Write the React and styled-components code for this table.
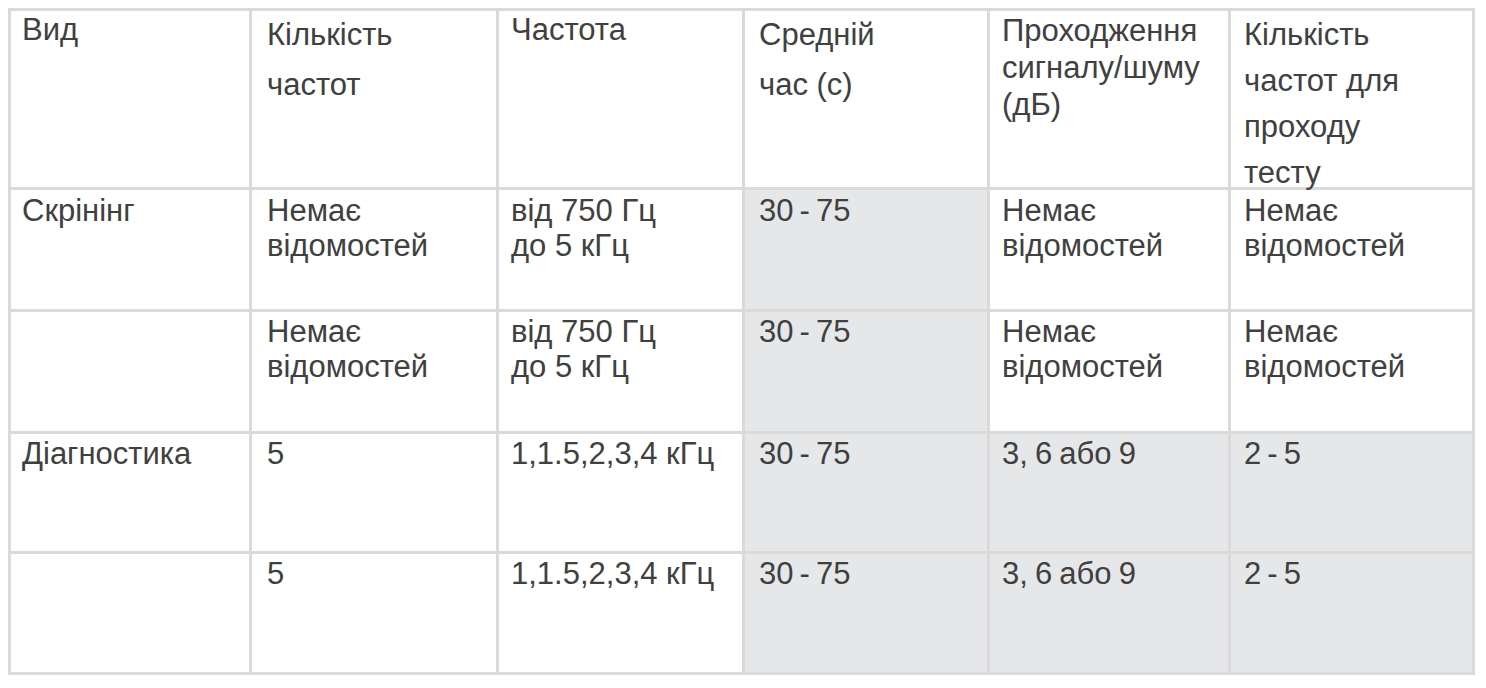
import React from "react";
import styled, { createGlobalStyle } from "styled-components";

const GlobalStyle = createGlobalStyle`
  html, body { margin: 0; padding: 0; background: #ffffff; }
  body { padding: 8px; }
  * { box-sizing: border-box; }
`;

const BORDER = "#dadada";
const FILL = "#e6e7e9";

const Grid = styled.div`
  display: grid;
  grid-template-columns: 241px 247px 246px 245px 241px 244px;
  grid-template-rows: 179px 122px 122px 120px 121px;
  width: max-content;
  border-top: 3px solid ${BORDER};
  border-left: 3px solid ${BORDER};
  font-family: "Liberation Sans", Arial, sans-serif;
  color: #404040;
`;

const Cell = styled.div`
  border-right: 3px solid ${BORDER};
  border-bottom: 3px solid ${BORDER};
  background: ${(p) => (p.$gray ? FILL : "transparent")};
  padding-top: ${(p) => p.$pt}px;
  padding-left: ${(p) => p.$pl}px;
  overflow: visible;
  min-width: 0;
`;

const TextBlock = styled.div`
  font-size: 31px;
  line-height: ${(p) => p.$lh}px;
  margin-top: ${(p) => p.$shift}px;
  word-spacing: ${(p) => p.$ws}px;
`;

const Line = styled.span`
  display: block;
  white-space: nowrap;
`;

const padLeft = [11, 15, 12, 14, 12, 13];

const header = [
  { lines: ["Вид"], lh: 35, pt: 1 },
  { lines: ["Кількість", "частот"], lh: 50, pt: -1 },
  { lines: ["Частота"], lh: 35, pt: 1 },
  { lines: ["Средній", "час (с)"], lh: 50, pt: -1 },
  { lines: ["Проходження", "сигналу/шуму", "(дБ)"], lh: 37, pt: 1 },
  { lines: ["Кількість", "частот для", "проходу", "тесту"], lh: 46, pt: 1 },
];

const none = ["Немає", "відомостей"];
const freqA = ["від 750 Гц", "до 5 кГц"];
const freqB = ["1,1.5,2,3,4 кГц"];
const time = { lines: ["30 - 75"], gray: true, ws: -2.5 };
const snr = { lines: ["3, 6 або 9"], gray: true, ws: -1.5 };
const pass = { lines: ["2 - 5"], gray: true, ws: -2.5 };

const rows = [
  {
    pt: 3,
    cells: [
      { lines: ["Скрінінг"] },
      { lines: none },
      { lines: freqA },
      time,
      { lines: none },
      { lines: none },
    ],
  },
  {
    pt: 2,
    cells: [
      { lines: [] },
      { lines: none },
      { lines: freqA },
      time,
      { lines: none },
      { lines: none },
    ],
  },
  {
    pt: 2,
    cells: [
      { lines: ["Діагностика"] },
      { lines: ["5"] },
      { lines: freqB },
      time,
      snr,
      pass,
    ],
  },
  {
    pt: 2,
    cells: [
      { lines: [] },
      { lines: ["5"] },
      { lines: freqB },
      time,
      snr,
      pass,
    ],
  },
];

function TableCell({ cell, col, pt, lh }) {
  const lineHeight = cell.lh ?? lh;
  const top = cell.pt ?? pt;
  return (
    <Cell $gray={!!cell.gray} $pt={Math.max(top, 0)} $pl={padLeft[col]}>
      <TextBlock $lh={lineHeight} $shift={Math.min(top, 0)} $ws={cell.ws ?? 0}>
        {cell.lines.map((l, i) => (
          <Line key={i}>{l}</Line>
        ))}
      </TextBlock>
    </Cell>
  );
}

export default function App() {
  return (
    <>
      <GlobalStyle />
      <Grid>
        {header.map((c, i) => (
          <TableCell key={"h" + i} cell={c} col={i} pt={1} lh={35} />
        ))}
        {rows.map((r, ri) =>
          r.cells.map((c, ci) => (
            <TableCell key={ri + "-" + ci} cell={c} col={ci} pt={r.pt} lh={35} />
          ))
        )}
      </Grid>
    </>
  );
}
